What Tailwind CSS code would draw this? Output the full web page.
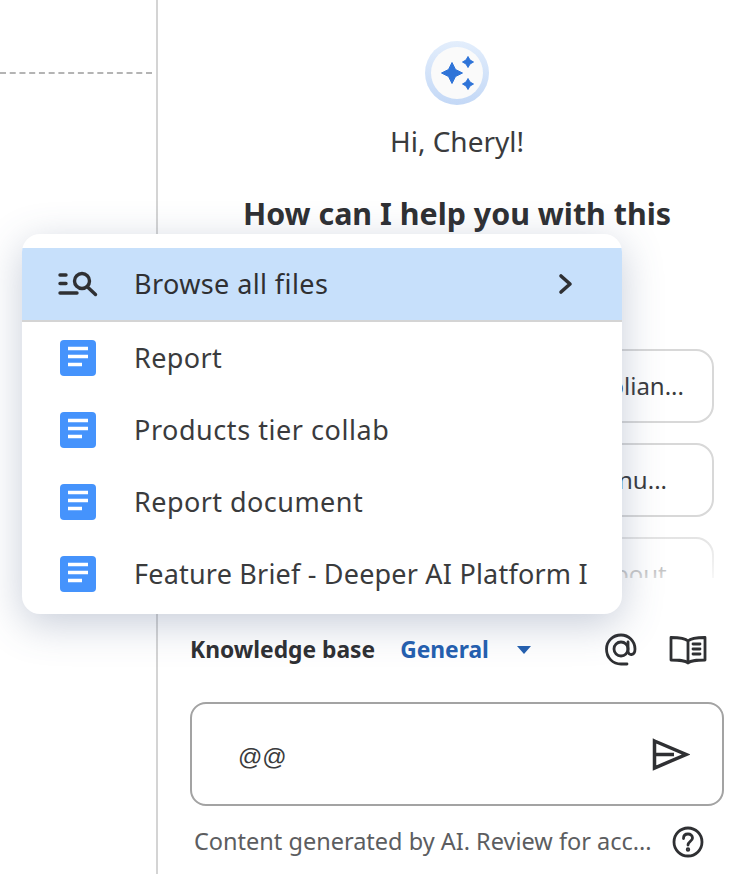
<!DOCTYPE html>
<html lang="en">
<head>
  <meta charset="UTF-8">
  <title>Assistant</title>
  <meta name="viewport" content="width=device-width, initial-scale=1.0">
  <script src="https://cdn.jsdelivr.net/npm/@tailwindcss/browser@4"></script>
</head>
<body class="bg-white font-['Noto_Sans',sans-serif] text-[#2f3033] overflow-hidden">
  <div class="relative flex h-[874px] w-[744px] overflow-hidden">
    <!-- Left pane -->
    <div class="w-[158px] shrink-0 border-r-2 border-[#d4d4d4] pt-[72px]">
      <div class="w-[152px] border-t-2 border-dashed border-[#b4b4b4]"></div>
    </div>

    <!-- Assistant pane -->
    <div class="flex w-[586px] flex-col pl-[32px] pr-[20px]">
      <div class="mt-[41px] flex justify-center">
        <div class="flex h-[64px] w-[64px] items-center justify-center rounded-full bg-gradient-to-b from-[#e3eefc] to-[#c3d8f6]">
          <div class="flex h-[52px] w-[52px] items-center justify-center rounded-full bg-[#fafafa]">
            <svg width="36" height="36" viewBox="0 0 36 36" fill="#2f74d8" stroke="#2f74d8" stroke-width="1" stroke-linejoin="round">
              <path d="M13 7.500 L16.500 14.500 L23.500 18 L16.500 21.500 L13 28.500 L9.500 21.500 L2.500 18 L9.500 14.500 Z"/>
              <path d="M29 1.500 L31 5 L34.500 7 L31 9 L29 12.500 L27 9 L23.500 7 L27 5 Z"/>
              <path d="M29 23.500 L31 27 L34.500 29 L31 31 L29 34.500 L27 31 L23.500 29 L27 27 Z"/>
            </svg>
          </div>
        </div>
      </div>
      <p class="mt-[17px] text-center text-[28px] leading-[38px] text-[#3a3b3d]">Hi, Cheryl!</p>
      <h2 class="mt-[34px] text-center text-[30.4px] font-bold leading-[40px] text-[#2f3033]">How can I help you with this<br>file?</h2>

      <!-- Suggestions -->
      <div class="relative mt-[75px] mr-[10px] flex h-[229px] flex-col gap-[20px] overflow-hidden">
        <div class="h-[74px] shrink-0 rounded-[18px] border-2 border-[#d8d8d8] pr-[28px] text-right text-[24px] leading-[70px] whitespace-nowrap text-[#3a3b3d]">Check this file for complian...</div>
        <div class="h-[74px] shrink-0 rounded-[18px] border-2 border-[#d8d8d8] pr-[45px] text-right text-[24px] leading-[70px] whitespace-nowrap text-[#3a3b3d]">Create a summary of the menu...</div>
        <div class="h-[74px] shrink-0 rounded-[18px] border-2 border-[#d8d8d8] pr-[26px] text-right text-[24px] leading-[70px] whitespace-nowrap text-[#3a3b3d]">Ask a question about...</div>
        <div class="absolute inset-x-0 bottom-0 h-[50px] bg-gradient-to-b from-white/20 to-white/80"></div>
      </div>

      <!-- Knowledge base row -->
      <div class="mt-[52px] flex h-[40px] items-center">
        <span class="text-[22.800px] font-bold text-[#2f3033]">Knowledge base</span>
        <span class="ml-[25px] text-[22.800px] font-bold text-[#2460b0]">General</span>
        <svg class="ml-[27px]" width="16" height="10" viewBox="0 0 16 10" fill="#2460b0"><path d="M1 1 H15 L8 9 Z"/></svg>
        <svg class="ml-auto" width="34" height="36" viewBox="0 0 34 36" fill="none" stroke="#2f3033" stroke-width="2.800" stroke-linecap="round">
          <circle cx="17" cy="17" r="7"/>
          <path d="M24 10 V19 C24 24 31 24 31 17 C31 9 24.500 3 17 3 C9 3 2.500 9 2.500 17 C2.500 26 9 32 17 32 H23"/>
        </svg>
        <svg class="ml-[31px] mr-[17px]" width="38" height="30" viewBox="0 0 38 30" fill="none" stroke="#2f3033" stroke-width="2.800" stroke-linejoin="round" stroke-linecap="round">
          <path d="M19 6 C16 3 10 2.500 2 2.500 V25 C10 25 16 25 19 28 C22 25 28 25 36 25 V2.500 C28 2.500 22 3 19 6 Z M19 6 V28"/>
          <path d="M24 9 H31 M24 14 H31 M24 19 H31"/>
        </svg>
      </div>

      <!-- Input -->
      <div class="mt-[32px] flex h-[104px] items-center rounded-[16px] border-2 border-[#a3a3a3] pl-[46px] pr-[32px]">
        <span class="mt-[6px] font-['Liberation_Sans',sans-serif] text-[24px] text-[#3a3b3d]">@@</span>
        <svg class="ml-auto mt-[1px]" width="38" height="34" viewBox="0 0 38 34" fill="none" stroke="#2f3033" stroke-width="3.500" stroke-linejoin="miter">
          <path d="M2.500 3 L34 16.500 L2.500 30 Z M2.500 16.500 H22"/>
        </svg>
      </div>

      <!-- Disclaimer -->
      <div class="mt-[16px] flex h-[40px] items-center pl-[4px]">
        <span class="text-[23.500px] text-[#5c5d60]">Content generated by AI. Review for acc...</span>
        <svg class="ml-auto mr-[20px]" width="32" height="32" viewBox="0 0 32 32" fill="none" stroke="#2f3033" stroke-width="2.800" stroke-linecap="round">
          <circle cx="16" cy="16" r="14"/>
          <path d="M11.500 12.500 C11.500 9.500 13.500 8 16 8 C18.500 8 20.500 9.500 20.500 12 C20.500 15 16 15.500 16 19"/>
          <circle cx="16" cy="23.500" r="0.800" fill="#2f3033"/>
        </svg>
      </div>
    </div>

    <!-- File menu -->
    <div class="absolute left-[22px] top-[234px] h-[380px] w-[600px] overflow-hidden rounded-[18px] bg-white pt-[14px] shadow-[0_10px_40px_rgba(70,90,130,0.3)]">
      <div class="flex h-[74px] items-center border-b-2 border-[#d4d4d4] bg-[#c7e0fb] pl-[36px] pr-[48px]">
        <svg width="40" height="26" viewBox="0 0 40 26" fill="none" stroke="#2f3033" stroke-width="3.400" stroke-linecap="round">
          <path d="M2 4 H8 M2 12.500 H8 M2 22 H19"/>
          <circle cx="24" cy="10" r="7.500"/>
          <path d="M29.500 16 L37.500 23.500"/>
        </svg>
        <span class="ml-[36px] text-[27px] tracking-[0.4px] text-[#2f3033]">Browse all files</span>
        <svg class="ml-auto" width="16" height="22" viewBox="0 0 16 22" fill="none" stroke="#2f3033" stroke-width="3.600" stroke-linecap="round" stroke-linejoin="round"><path d="M3 3 L12 11 L3 19"/></svg>
      </div>
      <div class="flex h-[72px] items-center pl-[38px]">
        <svg width="36" height="36" viewBox="0 0 36 36"><rect width="36" height="36" rx="4" fill="#4593fc"/><path d="M8 8.500 H28 M8 16.500 H28 M8 24.500 H22" stroke="#fff" stroke-width="3.500"/></svg>
        <span class="ml-[38px] text-[27px] tracking-[0.4px] text-[#3a3b3d]">Report</span>
      </div>
      <div class="flex h-[72px] items-center pl-[38px]">
        <svg width="36" height="36" viewBox="0 0 36 36"><rect width="36" height="36" rx="4" fill="#4593fc"/><path d="M8 8.500 H28 M8 16.500 H28 M8 24.500 H22" stroke="#fff" stroke-width="3.500"/></svg>
        <span class="ml-[38px] text-[27px] tracking-[0.55px] text-[#3a3b3d]">Products tier collab</span>
      </div>
      <div class="flex h-[72px] items-center pl-[38px]">
        <svg width="36" height="36" viewBox="0 0 36 36"><rect width="36" height="36" rx="4" fill="#4593fc"/><path d="M8 8.500 H28 M8 16.500 H28 M8 24.500 H22" stroke="#fff" stroke-width="3.500"/></svg>
        <span class="ml-[38px] text-[27px] tracking-[0.45px] text-[#3a3b3d]">Report document</span>
      </div>
      <div class="flex h-[72px] items-center pl-[38px]">
        <svg width="36" height="36" viewBox="0 0 36 36"><rect width="36" height="36" rx="4" fill="#4593fc"/><path d="M8 8.500 H28 M8 16.500 H28 M8 24.500 H22" stroke="#fff" stroke-width="3.500"/></svg>
        <span class="ml-[38px] text-[27px] tracking-[0.2px] whitespace-nowrap text-[#3a3b3d]">Feature Brief - Deeper AI Platform I</span>
      </div>
    </div>
  </div>
</body>
</html>
